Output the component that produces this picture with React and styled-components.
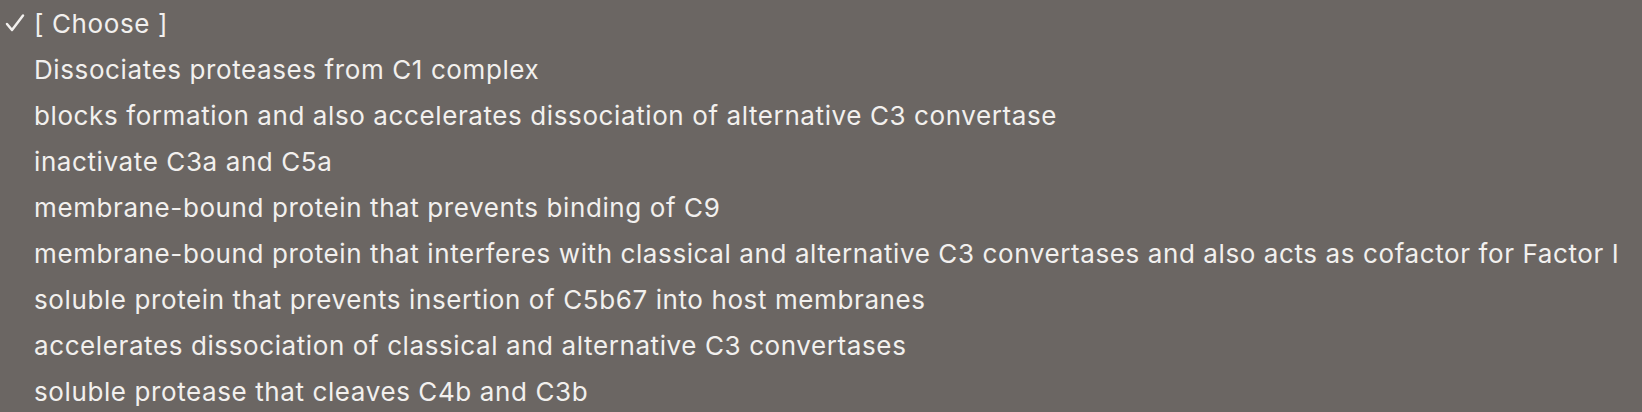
import React from 'react'
import styled, { createGlobalStyle } from 'styled-components'

const GlobalStyle = createGlobalStyle`
  html, body {
    margin: 0;
    padding: 0;
    background: #6b6663;
  }
`

const Menu = styled.ul`
  list-style: none;
  margin: 0;
  padding: 0;
  width: 1642px;
  height: 412px;
  overflow: hidden;
  background: #6b6663;
  font-family: Inter, 'Noto Sans', sans-serif;
  font-size: 26px;
  letter-spacing: 0.6px;
  color: #f2f0ee;
`

const Item = styled.li`
  display: flex;
  align-items: center;
  height: 46px;
  padding-left: 5px;
  white-space: nowrap;
`

const Check = styled.span`
  width: 29px;
  display: flex;
  align-items: center;
`

const Label = styled.span``

const options = [
  '[ Choose ]',
  'Dissociates proteases from C1 complex',
  'blocks formation and also accelerates dissociation of alternative C3 convertase',
  'inactivate C3a and C5a',
  'membrane-bound protein that prevents binding of C9',
  'membrane-bound protein that interferes with classical and alternative C3 convertases and also acts as cofactor for Factor I',
  'soluble protein that prevents insertion of C5b67 into host membranes',
  'accelerates dissociation of classical and alternative C3 convertases',
  'soluble protease that cleaves C4b and C3b',
]

const CheckMark = () => (
  <svg width="20" height="20" viewBox="0 0 20 20" fill="none">
    <path d="M2 11 L7 17 L18 2.5" stroke="#f2f0ee" strokeWidth="2.5" strokeLinecap="round" strokeLinejoin="round" />
  </svg>
)

const App = () => {
  return (
    <>
      <GlobalStyle />
      <Menu>
        {options.map((opt, i) => (
          <Item key={i}>
            <Check>{i === 0 && <CheckMark />}</Check>
            <Label>{opt}</Label>
          </Item>
        ))}
      </Menu>
    </>
  )
}

export default App
